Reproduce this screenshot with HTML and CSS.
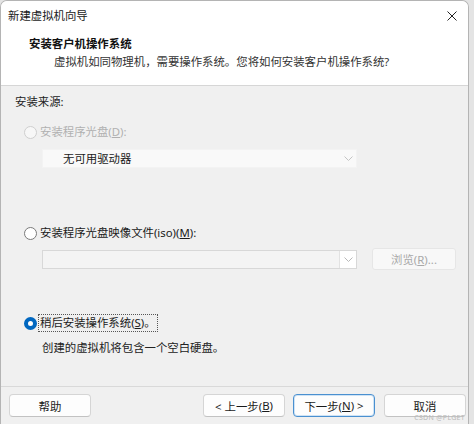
FILE: index.html
```html
<!DOCTYPE html>
<html lang="zh-CN">
<head>
<meta charset="utf-8">
<title>新建虚拟机向导</title>
<link rel="stylesheet" href="styles.css">
</head>
<body>
<div class="window">
  <div class="titlebar">
    <span class="title">新建虚拟机向导</span>
    <svg class="close" width="10" height="10" viewBox="0 0 10 10"><path d="M0.5 0.5 L9.5 9.5 M9.5 0.5 L0.5 9.5" stroke="#222" stroke-width="1" fill="none"/></svg>
  </div>
  <div class="header">
    <div class="h-title">安装客户机操作系统</div>
    <div class="h-sub">虚拟机如同物理机，需要操作系统。您将如何安装客户机操作系统?</div>
  </div>
  <div class="content">
    <div class="group-label">安装来源:</div>

    <div class="radio-row disabled">
      <span class="radio"></span>
      <span class="label">安装程序光盘(<u>D</u>):</span>
    </div>
    <div class="select disabled-select">
      <span class="sel-text">无可用驱动器</span>
      <svg class="chev" width="9" height="5" viewBox="0 0 9 5"><path d="M0.5 0.5 L4.5 4.5 L8.5 0.5" stroke="#c4c4c4" stroke-width="1" fill="none"/></svg>
    </div>

    <div class="radio-row r2">
      <span class="radio"></span>
      <span class="label">安装程序光盘映像文件(iso)(<u>M</u>):</span>
    </div>
    <div class="combo-row">
      <div class="combo">
        <span class="combo-input"></span>
        <span class="combo-btn">
          <svg width="9" height="5" viewBox="0 0 9 5"><path d="M0.5 0.5 L4.5 4.5 L8.5 0.5" stroke="#b8b8b8" stroke-width="1" fill="none"/></svg>
        </span>
      </div>
      <div class="browse">浏览(<u>R</u>)...</div>
    </div>

    <div class="radio-row r3">
      <span class="radio checked"></span>
      <span class="label focus">稍后安装操作系统(<u>S</u>)。</span>
    </div>
    <div class="note">创建的虚拟机将包含一个空白硬盘。</div>
  </div>
  <div class="footer">
    <div class="btn">帮助</div>
    <div class="spacer"></div>
    <div class="btn">&lt; 上一步(<u>B</u>)</div>
    <div class="btn primary">下一步(<u>N</u>) &gt;</div>
    <div class="btn last">取消</div>
  </div>
  <div class="watermark">CSDN @PLGET</div>
</div>
</body>
</html>
```

FILE: styles.css
```css
* { box-sizing: border-box; }
html, body { margin: 0; padding: 0; }
body {
  width: 474px;
  height: 424px;
  background: #e4e4e4;
  font-family: "Noto Sans", "Noto Sans CJK SC", sans-serif;
  font-size: 11.4px;
  color: #1a1a1a;
  overflow: hidden;
}
u { text-decoration: underline; text-underline-offset: 1px; }

.window {
  position: relative;
  width: 469px;
  height: 424px;
  background: #f0f0f0;
  border: 1px solid #b4b4b4;
  border-bottom: none;
  border-radius: 7px 7px 0 0;
  overflow: hidden;
  display: flex;
  flex-direction: column;
}

.titlebar {
  height: 29px;
  background: #fff;
  display: flex;
  align-items: center;
  padding: 0 0 0 7px;
}
.title { line-height: 16px; flex: 1; }
.close { margin-right: 11px; }

.header {
  height: 56px;
  background: #fff;
  border-bottom: 1px solid #d6d6d6;
  padding-top: 6px;
}
.h-title {
  font-weight: bold;
  line-height: 16px;
  padding-left: 28px;
  color: #111;
}
.h-sub {
  line-height: 16px;
  padding-left: 53px;
  margin-top: 2px;
  color: #333;
}

.content {
  flex: 1;
  padding: 8px 0 0 14px;
  display: flex;
  flex-direction: column;
  align-items: flex-start;
}
.group-label { line-height: 16px; color: #222; }

.radio-row {
  display: flex;
  align-items: center;
  height: 16px;
  margin-top: 14px;
  padding-left: 9px;
}
.radio {
  width: 13px;
  height: 13px;
  border-radius: 50%;
  border: 1px solid #7a7a7a;
  background: #fff;
  margin-right: 2px;
  flex: none;
}
.label { line-height: 16px; padding: 0 1px; }
.disabled .radio { border-color: #cfcfcf; background: #f7f7f7; }
.disabled .label { color: #b0b0b0; }
.radio.checked {
  border: 4px solid #0067c0;
  background: #fff;
}
.label.focus { outline: 1px dotted #555; outline-offset: 0; }

.select {
  margin-top: 9px;
  margin-left: 27px;
  width: 315px;
  height: 19px;
  background: #f9f9f9;
  border: 1px solid #f3f3f3;
  display: flex;
  align-items: center;
  padding-left: 20px;
}
.sel-text { flex: 1; line-height: 16px; color: #1a1a1a; }
.chev { margin-right: 3px; }

.r2 { margin-top: 57px; }

.combo-row {
  margin-top: 7px;
  margin-left: 27px;
  display: flex;
  align-items: center;
}
.combo {
  width: 315px;
  height: 19px;
  border: 1px solid #d8d8d8;
  background: #f4f4f4;
  display: flex;
}
.combo-input { flex: 1; }
.combo-btn {
  width: 17px;
  border-left: 1px solid #e2e2e2;
  background: #fff;
  display: flex;
  align-items: center;
  justify-content: center;
}
.browse {
  margin-left: 15px;
  width: 84px;
  height: 22px;
  background: #f8f8f8;
  border: 1px solid #e6e6e6;
  border-radius: 3px;
  color: #a8a8a8;
  display: flex;
  align-items: center;
  justify-content: center;
}

.r3 { margin-top: 45px; }
.note { margin-top: 9px; margin-left: 27px; line-height: 16px; color: #222; }

.footer {
  height: 38px;
  border-top: 1px solid #d9d9d9;
  display: flex;
  align-items: flex-start;
  padding: 7px 0 0 8px;
  gap: 8px;
}
.spacer { width: 96px; }
.btn {
  width: 82px;
  height: 23px;
  background: #fdfdfd;
  border: 1px solid #d5d5d5;
  border-bottom-color: #c2c2c2;
  border-radius: 4px;
  display: flex;
  align-items: center;
  justify-content: center;
  color: #1a1a1a;
}
.btn.last { margin-left: 1px; }
.btn.primary { border: 1px solid #4a90d0; box-shadow: inset 0 0 0 1px #cfe3f5; }

.watermark {
  position: absolute;
  right: 3px;
  bottom: 2px;
  font-size: 7px;
  color: #b8b8b8;
  letter-spacing: 0.3px;
}
```
